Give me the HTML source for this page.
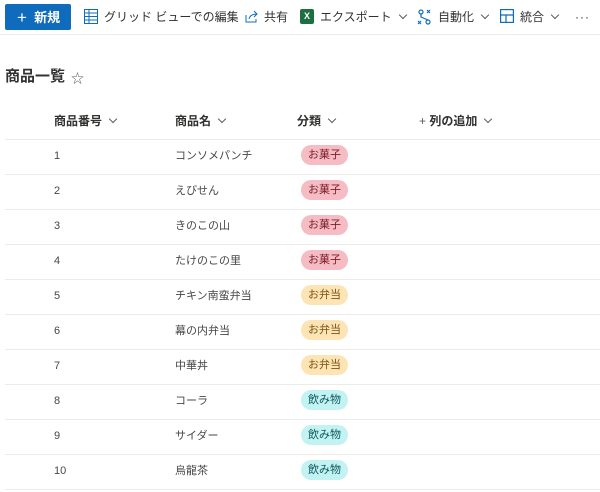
<!DOCTYPE html>
<html><head><meta charset="utf-8"><style>
*{box-sizing:border-box;margin:0;padding:0}
body{width:600px;height:492px;background:#fff;font-family:"Liberation Sans","Noto Sans CJK JP",sans-serif;color:#323130;position:relative;overflow:hidden}
.tb{position:absolute;left:0;top:0;width:600px;height:35px;border-bottom:1px solid #edebe9}
.btn{position:absolute;left:5px;top:4px;width:66px;height:26px;background:#0f6cbd;border-radius:2px;color:#fff;font-size:13px;font-weight:bold;line-height:26px;padding-left:12px}
.ti{position:absolute;top:8px;font-size:12px;color:#323130;line-height:18px;white-space:nowrap}
.chev{display:inline-block;width:6px;height:6px;border-right:1px solid #605e5c;border-bottom:1px solid #605e5c;transform:rotate(45deg);margin-left:8px;position:relative;top:-3px}
h1{position:absolute;left:5px;top:66px;font-size:15px;font-weight:bold;color:#323130;line-height:22px}
.star{position:absolute;left:71px;top:68px;font-size:13px;color:#605e5c}
.hd{position:absolute;top:112px;font-size:12px;font-weight:bold;white-space:nowrap;line-height:18px}
.row{position:absolute;left:5px;width:595px;height:35px;border-bottom:1px solid #edebe9}
.c{position:absolute;top:-1px;height:34px;line-height:34px;font-size:11px;color:#484644;white-space:nowrap}
.pill{position:absolute;left:296px;top:5px;width:47px;height:20px;border-radius:10px;font-size:11px;text-align:center;line-height:20px}
.p1{background:#f6bcc3;color:#7a1b27}.p2{background:#fde4b4;color:#7a5412}.p3{background:#c3f2f3;color:#0c5a5c}
</style></head><body>
<div class="tb">
<div class="btn"><span style="font-size:17px;font-weight:normal;position:relative;top:1px">+</span>&nbsp; 新規</div>
<svg style="position:absolute;left:84px;top:9px" width="14" height="15" viewBox="0 0 14 15" fill="none" stroke="#0f6cbd" stroke-width="1"><rect x="0.5" y="0.5" width="13" height="14"/><path d="M0.5 4h13M0.5 7.5h13M0.5 11h13M5 0.5v14"/></svg>
<div class="ti" style="left:104px">グリッド ビューでの編集</div>
<svg style="position:absolute;left:245px;top:10px" width="14" height="13" viewBox="0 0 14 13" fill="none" stroke="#0f6cbd" stroke-width="1"><path d="M1 5v7h10V9"/><path d="M4 9c1-4 4-5 8-5M9 1l3 3-3 3"/></svg>
<div class="ti" style="left:264px">共有</div>
<div style="position:absolute;left:300px;top:9px;width:14px;height:15px;background:#1d6f42;border-radius:2px;color:#fff;font-size:9px;font-weight:bold;text-align:center;line-height:15px">X</div>
<div class="ti" style="left:320px">エクスポート<span class="chev"></span></div>
<svg style="position:absolute;left:417px;top:9px" width="15" height="16" viewBox="0 0 15 16" fill="none" stroke="#0f6cbd" stroke-width="1.2"><circle cx="4" cy="3" r="2"/><circle cx="11" cy="13" r="2"/><path d="M4 5v3l7 3M10 1l3 3M13 1l-3 3M1 12l3 3M4 12l-3 3"/></svg>
<div class="ti" style="left:438px">自動化<span class="chev"></span></div>
<svg style="position:absolute;left:500px;top:9px" width="14" height="14" viewBox="0 0 14 14" fill="none" stroke="#0f6cbd" stroke-width="1.2"><rect x="0.6" y="0.6" width="12.8" height="12.8"/><path d="M0.6 6h12.8M6 6v7.4"/></svg>
<div class="ti" style="left:520px">統合<span class="chev"></span></div>
<div class="ti" style="left:575px;letter-spacing:1px">···</div>
</div>
<h1>商品一覧</h1><div class="star">☆</div>
<div class="hd" style="left:54px">商品番号<span class="chev"></span></div>
<div class="hd" style="left:175px">商品名<span class="chev"></span></div>
<div class="hd" style="left:297px">分類<span class="chev"></span></div>
<div class="hd" style="left:419px"><span style="font-weight:normal;color:#605e5c">+</span> 列の追加<span class="chev"></span></div>
<div class="row" style="top:104px;height:36px"></div>
<div class="row" style="top:140px"><div class="c" style="left:49px">1</div><div class="c" style="left:170px">コンソメパンチ</div><div class="pill p1">お菓子</div></div>
<div class="row" style="top:175px"><div class="c" style="left:49px">2</div><div class="c" style="left:170px">えびせん</div><div class="pill p1">お菓子</div></div>
<div class="row" style="top:210px"><div class="c" style="left:49px">3</div><div class="c" style="left:170px">きのこの山</div><div class="pill p1">お菓子</div></div>
<div class="row" style="top:245px"><div class="c" style="left:49px">4</div><div class="c" style="left:170px">たけのこの里</div><div class="pill p1">お菓子</div></div>
<div class="row" style="top:280px"><div class="c" style="left:49px">5</div><div class="c" style="left:170px">チキン南蛮弁当</div><div class="pill p2">お弁当</div></div>
<div class="row" style="top:315px"><div class="c" style="left:49px">6</div><div class="c" style="left:170px">幕の内弁当</div><div class="pill p2">お弁当</div></div>
<div class="row" style="top:350px"><div class="c" style="left:49px">7</div><div class="c" style="left:170px">中華丼</div><div class="pill p2">お弁当</div></div>
<div class="row" style="top:385px"><div class="c" style="left:49px">8</div><div class="c" style="left:170px">コーラ</div><div class="pill p3">飲み物</div></div>
<div class="row" style="top:420px"><div class="c" style="left:49px">9</div><div class="c" style="left:170px">サイダー</div><div class="pill p3">飲み物</div></div>
<div class="row" style="top:455px"><div class="c" style="left:49px">10</div><div class="c" style="left:170px">烏龍茶</div><div class="pill p3">飲み物</div></div>
</body></html>
